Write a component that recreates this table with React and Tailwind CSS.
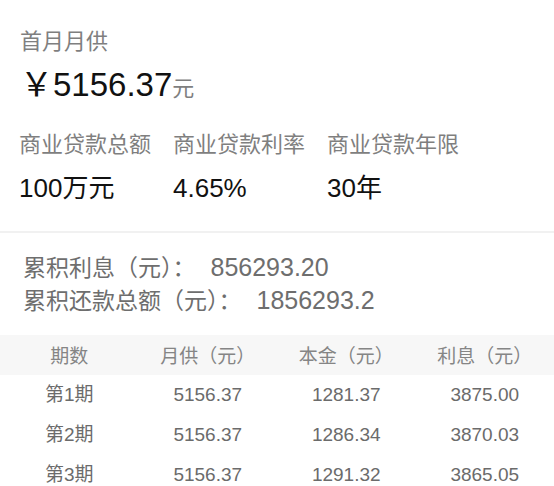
const FONT = "font-['Liberation_Sans','Noto_Sans_CJK_SC',sans-serif]";

const STATS = [
  { label: '商业贷款总额', value: '100万元' },
  { label: '商业贷款利率', value: '4.65%' },
  { label: '商业贷款年限', value: '30年' },
];

const ROWS = [
  ['第1期', '5156.37', '1281.37', '3875.00'],
  ['第2期', '5156.37', '1286.34', '3870.03'],
  ['第3期', '5156.37', '1291.32', '3865.05'],
];

export default function App() {
  return (
    <div className={`w-[554px] h-[486px] overflow-hidden bg-white ${FONT}`}>
      {/* 首月月供 */}
      <section className="px-5 pt-[28px] h-[231px]">
        <div className="text-[22px] leading-[28px] text-[#7f7f7f]">首月月供</div>
        <div className="mt-[9px] flex items-baseline leading-[40px] text-[#111]">
          <span className="text-[33px]">￥5156.37</span>
          <span className="text-[22px] text-[#7f7f7f]">元</span>
        </div>
        <div className="mt-[22px] -ml-px flex gap-[22px]">
          {STATS.map((s) => (
            <div key={s.label} className="flex flex-col">
              <span className="text-[22px] leading-[28px] text-[#7f7f7f]">{s.label}</span>
              <span className="mt-[14px] text-[26px] leading-[30px] text-[#111]">{s.value}</span>
            </div>
          ))}
        </div>
      </section>

      <div className="h-[2px] bg-[#f1f1f1]" />

      {/* 累积 */}
      <section className="pl-[23px] pt-[18px] h-[102px] text-[23px] leading-[32px] text-[#6e6e6e]">
        <div>
          累积利息（元）：<span className="ml-[15px] text-[25px]">856293.20</span>
        </div>
        <div>
          累积还款总额（元）：<span className="ml-[15px] text-[25px]">1856293.2</span>
        </div>
      </section>

      {/* 还款明细 */}
      <div className="grid grid-cols-4 h-10 bg-[#f7f7f7] text-[19px] text-[#858585] items-center text-center pt-1">
        <span>期数</span>
        <span>月供（元）</span>
        <span>本金（元）</span>
        <span>利息（元）</span>
      </div>
      {ROWS.map((r) => (
        <div key={r[0]} className="grid grid-cols-4 h-10 items-center text-center text-[19px] text-[#6b6b6b]">
          {r.map((c, i) => (
            <span key={i}>{c}</span>
          ))}
        </div>
      ))}
    </div>
  );
}
